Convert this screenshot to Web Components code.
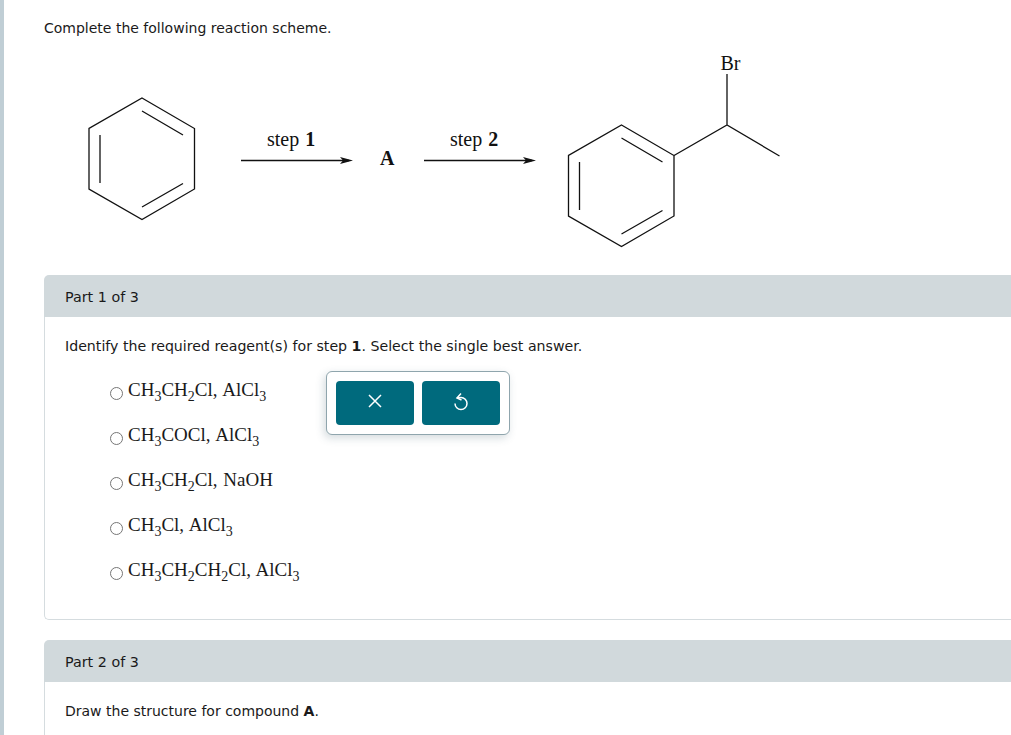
<!DOCTYPE html>
<html>
<head>
<meta charset="utf-8">
<title>Reaction scheme</title>
<style>
  html, body { margin: 0; height: 735px; overflow: hidden; background: #fff; }
</style>
</head>
<body>
<question-page>
  <p slot="intro">Complete the following reaction scheme.</p>
  <reaction-scheme slot="intro"></reaction-scheme>
  <question-part label="Part 1 of 3">
    <p style="font-size: 14.17px">Identify the required reagent(s) for step <b>1</b>. Select the single best answer.</p>
    <answer-option>CH<sub>3</sub>CH<sub>2</sub>Cl, AlCl<sub>3</sub></answer-option>
    <answer-option>CH<sub>3</sub>COCl, AlCl<sub>3</sub></answer-option>
    <answer-option>CH<sub>3</sub>CH<sub>2</sub>Cl, NaOH</answer-option>
    <answer-option>CH<sub>3</sub>Cl, AlCl<sub>3</sub></answer-option>
    <answer-option>CH<sub>3</sub>CH<sub>2</sub>CH<sub>2</sub>Cl, AlCl<sub>3</sub></answer-option>
    <check-tools></check-tools>
  </question-part>
  <question-part label="Part 2 of 3">
    <p>Draw the structure for compound <b>A</b>.</p>
  </question-part>
</question-page>

<script>
class QuestionPage extends HTMLElement {
  constructor() {
    super();
    this.attachShadow({ mode: 'open' });
  }

  connectedCallback() {
    this.shadowRoot.innerHTML = /* html */`
    <style>
      :host {
        display: flex;
        width: 1011px;
        height: 735px;
        overflow: hidden;
        color: #1a1a1a;
        font: 14px/20px "DejaVu Sans", Verdana, sans-serif;
      }
      .bar {
        flex: 0 0 4px;
        background: #c0ced5;
      }
      .main {
        flex: 1 0 auto;
        padding: 18px 0 0 40px;
      }
      ::slotted(p) {
        margin: 0;
      }
      .parts {
        display: flex;
        flex-direction: column;
        gap: 20px;
        margin-right: -40px;
      }
    </style>
    <div class="bar"></div>
    <div class="main">
      <slot name="intro"></slot>
      <div class="parts"><slot></slot></div>
    </div>`;
  }
}

class ReactionScheme extends HTMLElement {
  constructor() {
    super();
    this.attachShadow({ mode: 'open' });
  }

  // ring drawn from the top vertex, offsets are the same for both molecules
  static ring(x, y) {
    const p = (dx, dy) => `${x + dx},${y + dy}`;
    return `
      <polygon points="${p(0, 0)} ${p(52.5, 30.5)} ${p(52.5, 91)} ${p(0, 121.5)} ${p(-53, 91)} ${p(-53, 30.5)}"/>
      <path d="M${p(0, 13)}L${p(41, 37)}M${p(-42, 37)}L${p(-42, 85)}M${p(0, 109)}L${p(41, 85.5)}"/>`;
  }

  static arrow(x1, x2, y) {
    return `
      <line x1="${x1}" y1="${y}" x2="${x2 - 4}" y2="${y}"/>
      <path class="head" d="M${x2 - 13},${y - 3.5}L${x2},${y}L${x2 - 13},${y + 3.5}L${x2 - 10},${y}Z"/>`;
  }

  connectedCallback() {
    this.shadowRoot.innerHTML = /* html */`
    <style>
      :host {
        display: block;
        height: 237px;
        margin-left: -40px;
      }
      svg {
        display: block;
      }
      g {
        fill: none;
        stroke: #111;
        stroke-width: 1.3;
      }
      .head {
        fill: #111;
        stroke: none;
      }
      text {
        font-family: "Liberation Serif", "Times New Roman", serif;
        font-size: 20px;
        word-spacing: 1px;
        fill: #111;
      }
      .bold {
        font-weight: 700;
      }
    </style>
    <svg width="960" height="237" viewBox="4 38 960 237">
      <g>
        ${ReactionScheme.ring(142, 98)}
        ${ReactionScheme.ring(621.5, 125)}
        <path d="M674,155.5L727,125L779.500,156M727,125L727,74"/>
        ${ReactionScheme.arrow(241, 353, 160.5)}
        ${ReactionScheme.arrow(424, 536, 160.5)}
      </g>
      <text x="267" y="146">step <tspan class="bold">1</tspan></text>
      <text x="450" y="146">step <tspan class="bold">2</tspan></text>
      <text class="bold" x="380" y="165">A</text>
      <text x="720.500" y="70">Br</text>
    </svg>`;
  }
}

class QuestionPart extends HTMLElement {
  constructor() {
    super();
    this.attachShadow({ mode: 'open' });
  }

  connectedCallback() {
    this.shadowRoot.innerHTML = /* html */`
    <style>
      :host {
        display: block;
        position: relative;
      }
      .head {
        box-sizing: border-box;
        height: 42px;
        padding: 2px 0 0 21px;
        display: flex;
        align-items: center;
        background: #d1d9dc;
        border-radius: 5px 0 0 0;
        font-size: 14.3px;
      }
      .body {
        padding: 19px 20px 27px 20px;
        border: 1px solid #d5dcdf;
        border-top: 0;
        border-right: 0;
        border-radius: 0 0 0 5px;
      }
      ::slotted(p) {
        margin: 0 0 11px 0;
      }
    </style>
    <div class="head">${this.getAttribute('label')}</div>
    <div class="body"><slot></slot></div>`;
  }
}

class AnswerOption extends HTMLElement {
  constructor() {
    super();
    this.attachShadow({ mode: 'open' });
  }

  connectedCallback() {
    this.shadowRoot.innerHTML = /* html */`
    <style>
      :host {
        display: flex;
        align-items: center;
        gap: 5px;
        height: 45px;
        padding-left: 45px;
        font: 19px/24px "Liberation Serif", "Times New Roman", serif;
        word-spacing: 1px;
      }
      .radio {
        flex: 0 0 auto;
        box-sizing: border-box;
        width: 13px;
        height: 13px;
        margin-top: 8px;
        border: 1px solid #767676;
        border-radius: 50%;
        background: #fff;
      }
      ::slotted(sub) {
        font-size: 14px;
        line-height: 0;
      }
    </style>
    <span class="radio"></span>
    <span class="label"><slot></slot></span>`;
  }
}

class CheckTools extends HTMLElement {
  constructor() {
    super();
    this.attachShadow({ mode: 'open' });
  }

  connectedCallback() {
    this.shadowRoot.innerHTML = /* html */`
    <style>
      :host {
        position: absolute;
        left: 282px;
        top: 96px;
        display: flex;
        gap: 8px;
        padding: 9px;
        background: #fff;
        border: 1px solid #8fa5ad;
        border-radius: 6px;
        box-shadow: -2px 3px 8px rgba(60, 90, 105, .22);
      }
      button {
        display: flex;
        align-items: center;
        justify-content: center;
        width: 78px;
        height: 44px;
        padding: 0;
        border: 0;
        border-radius: 4px;
        background: #006a7d;
      }
      svg {
        fill: none;
        stroke: #fff;
        stroke-width: 1.5;
      }
      .clear {
        margin-bottom: 4px;
      }
    </style>
    <button aria-label="Clear">
      <svg class="clear" width="14" height="14" viewBox="0 0 14 14"><path d="M1,1L13,13M13,1L1,13"/></svg>
    </button>
    <button aria-label="Undo">
      <svg width="18" height="20" viewBox="0 -1 18 20"><path d="M5,4.300Q6.800,3.500 9,3.500A6,6 0 1 1 3,9.500"/><path d="M9,-.5L5,4L9.500,6"/></svg>
    </button>`;
  }
}

customElements.define('question-page', QuestionPage);
customElements.define('reaction-scheme', ReactionScheme);
customElements.define('question-part', QuestionPart);
customElements.define('answer-option', AnswerOption);
customElements.define('check-tools', CheckTools);
</script>
</body>
</html>
